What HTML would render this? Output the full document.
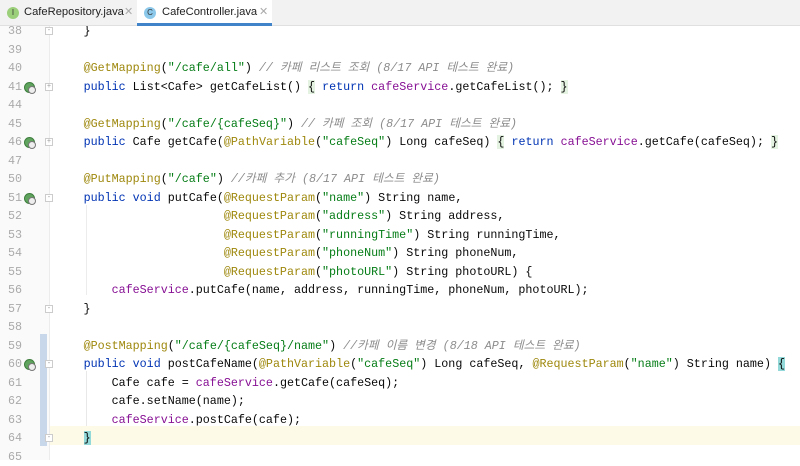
<!DOCTYPE html>
<html><head><meta charset="utf-8"><style>
*{margin:0;padding:0;box-sizing:border-box}
body{width:800px;height:460px;overflow:hidden;background:#fff;position:relative;font-family:"Liberation Mono","Noto Sans CJK KR",monospace}
.tabs{position:absolute;left:0;top:0;width:800px;height:26px;background:#f2f2f2;border-bottom:1px solid #e0e0e0;z-index:5;font-family:"Liberation Sans",sans-serif;font-size:11.2px;color:#222}
.tab{position:absolute;top:0;height:26px;line-height:25px}
.tab .ic{position:absolute;top:7px;width:12px;height:12px;border-radius:50%;font-size:8px;line-height:12px;text-align:center;color:#333;font-family:"Liberation Sans",sans-serif}
.tab .x{position:absolute;top:0;color:#aaa;font-size:11px}
.gut{position:absolute;left:0;top:0;width:50px;height:460px;background:#fafafa;border-right:1px solid #ececec}
.row{position:absolute;left:0;width:800px;height:18.5px;line-height:18.5px;font-size:11.7px;white-space:pre;color:#080808}
.ln{position:absolute;left:0;width:22px;text-align:right;color:#aaa;font-size:11.7px}
.code{position:absolute;left:55.5px}
.a{color:#9e880d}.s{color:#067d17}.k{color:#0033b3}.f{color:#871094}.c{color:#8c8c8c;font-style:italic}
.m{color:#080808}
.gi{position:absolute;left:24px;top:4px;width:11px;height:11px;border-radius:50%;background:#5fa35f;border:1px solid #3d7e3d}
.gi:after{content:"";position:absolute;right:-2px;bottom:-2px;width:6px;height:6px;border-radius:50%;background:#eee;border:1px solid #777}
.fold{position:absolute;left:45px;top:5px;width:8px;height:8px;border:1px solid #ccc;background:#fff;font-size:7px;line-height:6px;text-align:center;color:#999}
.hb{background:#e4f3e1}
</style></head><body>
<div class="gut"></div>
<div style="position:absolute;left:40px;top:334px;width:7px;height:112px;background:#c8d8ea"></div>
<div style="position:absolute;left:50px;top:426px;width:750px;height:18.5px;background:#fdfbe8"></div>
<div style="position:absolute;left:86px;top:371px;width:1px;height:55px;background:#e8e8e8"></div>
<div style="position:absolute;left:86px;top:205px;width:1px;height:90px;background:#ececec"></div>

<div class="tabs">
 <div class="tab" style="left:0;width:136px">
  <span class="ic" style="left:7px;background:#9ccf7a">I</span>
  <span style="position:absolute;left:24px">CafeRepository.java</span>
  <span class="x" style="left:124px">✕</span>
 </div>
 <div class="tab" style="left:137px;width:135px;background:#fff;border-bottom:3px solid #4083c9">
  <span class="ic" style="left:7px;background:#8cc8ea">C</span>
  <span style="position:absolute;left:25px">CafeController.java</span>
  <span class="x" style="left:122px">✕</span>
 </div>
</div>

<div class="row" style="top:22px"><span class="ln">38</span><span class="fold">-</span><span class="code">    }</span></div>
<div class="row" style="top:40.5px"><span class="ln">39</span></div>
<div class="row" style="top:59px"><span class="ln">40</span><span class="code">    <span class="a">@GetMapping</span>(<span class="s">"/cafe/all"</span>) <span class="c">// 카페 리스트 조회 (8/17 API 테스트 완료)</span></span></div>
<div class="row" style="top:77.5px"><span class="ln">41</span><span class="gi"></span><span class="fold">+</span><span class="code">    <span class="k">public</span> List&lt;Cafe&gt; <span class="m">getCafeList</span>() <span class="hb">{</span> <span class="k">return</span> <span class="f">cafeService</span>.getCafeList(); <span class="hb">}</span></span></div>
<div class="row" style="top:96px"><span class="ln">44</span></div>
<div class="row" style="top:114.5px"><span class="ln">45</span><span class="code">    <span class="a">@GetMapping</span>(<span class="s">"/cafe/{cafeSeq}"</span>) <span class="c">// 카페 조회 (8/17 API 테스트 완료)</span></span></div>
<div class="row" style="top:133px"><span class="ln">46</span><span class="gi"></span><span class="fold">+</span><span class="code">    <span class="k">public</span> Cafe <span class="m">getCafe</span>(<span class="a">@PathVariable</span>(<span class="s">"cafeSeq"</span>) Long cafeSeq) <span class="hb">{</span> <span class="k">return</span> <span class="f">cafeService</span>.getCafe(cafeSeq); <span class="hb">}</span></span></div>
<div class="row" style="top:151.5px"><span class="ln">47</span></div>
<div class="row" style="top:170px"><span class="ln">50</span><span class="code">    <span class="a">@PutMapping</span>(<span class="s">"/cafe"</span>) <span class="c">//카페 추가 (8/17 API 테스트 완료)</span></span></div>
<div class="row" style="top:188.5px"><span class="ln">51</span><span class="gi"></span><span class="fold">-</span><span class="code">    <span class="k">public void</span> <span class="m">putCafe</span>(<span class="a">@RequestParam</span>(<span class="s">"name"</span>) String name,</span></div>
<div class="row" style="top:207px"><span class="ln">52</span><span class="code">                        <span class="a">@RequestParam</span>(<span class="s">"address"</span>) String address,</span></div>
<div class="row" style="top:225.5px"><span class="ln">53</span><span class="code">                        <span class="a">@RequestParam</span>(<span class="s">"runningTime"</span>) String runningTime,</span></div>
<div class="row" style="top:244px"><span class="ln">54</span><span class="code">                        <span class="a">@RequestParam</span>(<span class="s">"phoneNum"</span>) String phoneNum,</span></div>
<div class="row" style="top:262.5px"><span class="ln">55</span><span class="code">                        <span class="a">@RequestParam</span>(<span class="s">"photoURL"</span>) String photoURL) {</span></div>
<div class="row" style="top:281px"><span class="ln">56</span><span class="code">        <span class="f">cafeService</span>.putCafe(name, address, runningTime, phoneNum, photoURL);</span></div>
<div class="row" style="top:299.5px"><span class="ln">57</span><span class="fold">-</span><span class="code">    }</span></div>
<div class="row" style="top:318px"><span class="ln">58</span></div>
<div class="row" style="top:336.5px"><span class="ln">59</span><span class="code">    <span class="a">@PostMapping</span>(<span class="s">"/cafe/{cafeSeq}/name"</span>) <span class="c">//카페 이름 변경 (8/18 API 테스트 완료)</span></span></div>
<div class="row" style="top:355px"><span class="ln">60</span><span class="gi"></span><span class="fold">-</span><span class="code">    <span class="k">public void</span> <span class="m">postCafeName</span>(<span class="a">@PathVariable</span>(<span class="s">"cafeSeq"</span>) Long cafeSeq, <span class="a">@RequestParam</span>(<span class="s">"name"</span>) String name) <span style="background:#93d9d9">{</span></span></div>
<div class="row" style="top:373.5px"><span class="ln">61</span><span class="code">        Cafe cafe = <span class="f">cafeService</span>.getCafe(cafeSeq);</span></div>
<div class="row" style="top:392px"><span class="ln">62</span><span class="code">        cafe.setName(name);</span></div>
<div class="row" style="top:410.5px"><span class="ln">63</span><span class="code">        <span class="f">cafeService</span>.postCafe(cafe);</span></div>
<div class="row" style="top:429px"><span class="ln">64</span><span class="fold">-</span><span class="code">    <span style="background:#93d9d9">}</span></span></div>
<div class="row" style="top:447.5px"><span class="ln">65</span></div>
</body></html>
